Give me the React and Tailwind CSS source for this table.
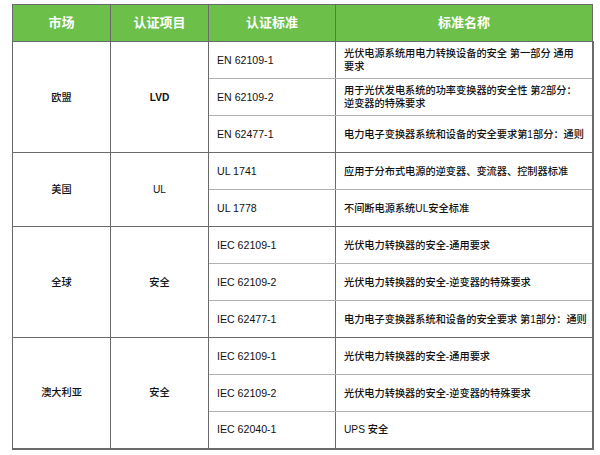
import React from "react";

const groups = [
  {
    market: "欧盟",
    item: "LVD",
    stds: [
      ["EN 62109-1", ["光伏电源系统用电力转换设备的安全 第一部分 通用", "要求"]],
      ["EN 62109-2", ["用于光伏发电系统的功率变换器的安全性 第2部分：", "逆变器的特殊要求"]],
      ["EN 62477-1", ["电力电子变换器系统和设备的安全要求第1部分：通则"]],
    ],
  },
  {
    market: "美国",
    item: "UL",
    stds: [
      ["UL 1741", ["应用于分布式电源的逆变器、变流器、控制器标准"]],
      ["UL 1778", ["不间断电源系统UL安全标准"]],
    ],
  },
  {
    market: "全球",
    item: "安全",
    stds: [
      ["IEC 62109-1", ["光伏电力转换器的安全-通用要求"]],
      ["IEC 62109-2", ["光伏电力转换器的安全-逆变器的特殊要求"]],
      ["IEC 62477-1", ["电力电子变换器系统和设备的安全要求 第1部分：通则"]],
    ],
  },
  {
    market: "澳大利亚",
    item: "安全",
    stds: [
      ["IEC 62109-1", ["光伏电力转换器的安全-通用要求"]],
      ["IEC 62109-2", ["光伏电力转换器的安全-逆变器的特殊要求"]],
      ["IEC 62040-1", ["UPS 安全"]],
    ],
  },
];

export default function App() {
  const font = { fontFamily: '"Liberation Sans", "Noto Sans CJK SC", sans-serif' };
  return (
    <div className="w-[600px] h-[455px] bg-white pt-[4px] pl-[12px]" style={font}>
      <table className="table-fixed border-collapse w-[580px] text-[#111]">
        <colgroup>
          <col className="w-[98px]" />
          <col className="w-[98px]" />
          <col className="w-[127px]" />
          <col className="w-[257px]" />
        </colgroup>
        <thead>
          <tr className="h-[37px] bg-[#6cc04a] text-white text-[13px] font-bold">
            <th className="border border-[#6a6a6a] text-center">市场</th>
            <th className="border border-[#6a6a6a] text-center">认证项目</th>
            <th className="border border-[#6a6a6a] text-center">认证标准</th>
            <th className="border border-[#6a6a6a] text-center">标准名称</th>
          </tr>
        </thead>
        <tbody className="text-[10.2px] leading-[13px] font-medium">
          {groups.map((g, gi) =>
            g.stds.map((s, si) => {
              const last = si === g.stds.length - 1;
              const bottom = last ? "border-b border-b-[#6a6a6a]" : "border-b border-b-[#b0b0b0]";
              const lastGroup = gi === groups.length - 1 && last;
              return (
                <tr key={gi + "-" + si} className="h-[37px]">
                  {si === 0 && (
                    <>
                      <td
                        rowSpan={g.stds.length}
                        className={`border-l border-r border-b border-[#6a6a6a] text-center ${gi === groups.length - 1 ? "border-b-2" : ""}`}
                      >
                        {g.market}
                      </td>
                      <td
                        rowSpan={g.stds.length}
                        className={`border-r border-b border-[#6a6a6a] text-center ${g.item === "LVD" ? "font-bold" : ""} ${gi === groups.length - 1 ? "border-b-2" : ""}`}
                      >
                        {g.item}
                      </td>
                    </>
                  )}
                  <td className={`border-r border-[#6a6a6a] ${bottom} ${lastGroup ? "border-b-2" : ""} pl-[8px] whitespace-nowrap text-[10.6px]`}>
                    {s[0]}
                  </td>
                  <td className={`border-r-2 border-r-[#6a6a6a] ${bottom} ${lastGroup ? "border-b-2" : ""} pl-[8px] whitespace-nowrap overflow-hidden`}>
                    {s[1].map((l, li) => (
                      <div key={li}>{l}</div>
                    ))}
                  </td>
                </tr>
              );
            })
          )}
        </tbody>
      </table>
    </div>
  );
}
